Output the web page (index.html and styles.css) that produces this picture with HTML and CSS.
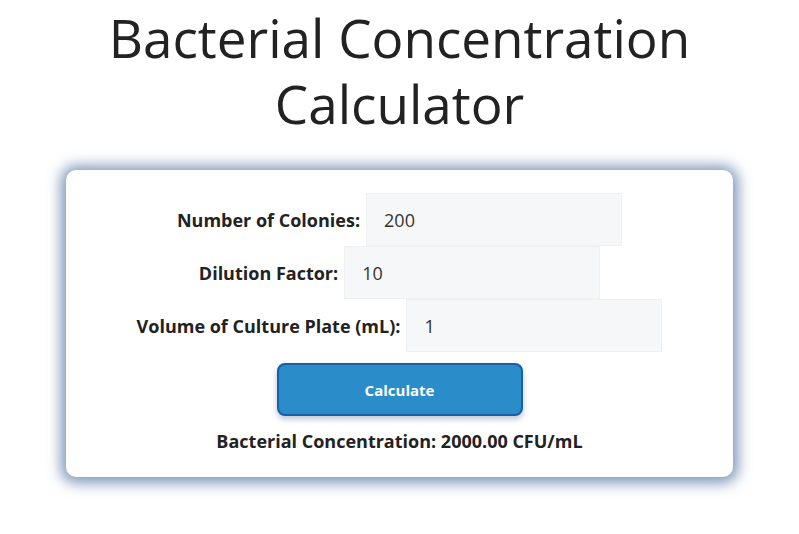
FILE: index.html
```html
<!DOCTYPE html>
<html lang="en">
<head>
<meta charset="utf-8">
<title>Bacterial Concentration Calculator</title>
<link rel="stylesheet" href="styles.css">
</head>
<body>
<h1 class="title">Bacterial Concentration Calculator</h1>
<div class="card">
  <div class="row">
    <label class="label" for="colonies">Number of Colonies:</label>
    <input class="field" id="colonies" type="text" value="200">
  </div>
  <div class="row">
    <label class="label" for="dilution">Dilution Factor:</label>
    <input class="field" id="dilution" type="text" value="10">
  </div>
  <div class="row">
    <label class="label" for="volume">Volume of Culture Plate (mL):</label>
    <input class="field" id="volume" type="text" value="1">
  </div>
  <div class="actions">
    <button class="btn" type="button">Calculate</button>
  </div>
  <p class="result">Bacterial Concentration: 2000.00 CFU/mL</p>
</div>
</body>
</html>
```

FILE: styles.css
```css
* { box-sizing: border-box; }
html, body {
  min-height: 100%;
}
body {
  margin: 0;
  padding-bottom: 50px;
  background: #ffffff;
  font-family: "Open Sans", "Noto Sans", sans-serif;
  color: #222222;
}
.title {
  margin: 5px 0 0;
  font-weight: 400;
  font-size: 53px;
  line-height: 66px;
  text-align: center;
  color: #222222;
}
.card {
  width: 667px;
  margin: 33px auto 0;
  background: #ffffff;
  border-radius: 10px;
  box-shadow: 0 1px 14px 5px rgba(70, 105, 155, 0.7);
  padding: 23px 20px 24px;
}
.row {
  display: flex;
  justify-content: center;
  align-items: center;
  gap: 6px;
}
.label {
  font-weight: 700;
  font-size: 18px;
  color: #222222;
}
.field {
  width: 256px;
  height: 53px;
  padding: 0 17px;
  font-family: inherit;
  font-size: 18px;
  color: #333333;
  background: #f6f7f8;
  border: 1px solid #eef0f2;
  border-radius: 0;
}
.actions {
  display: flex;
  justify-content: center;
  margin-top: 11px;
}
.btn {
  width: 246px;
  height: 53px;
  background: #2a8cc8;
  color: #ffffff;
  border: 2px solid #1560a6;
  border-radius: 8px;
  font-family: inherit;
  font-weight: 700;
  font-size: 15px;
  box-shadow: 0 3px 6px rgba(60, 90, 130, 0.35);
}
.result {
  margin: 13px 0 0;
  text-align: center;
  font-weight: 700;
  font-size: 18px;
  color: #222222;
}
```
